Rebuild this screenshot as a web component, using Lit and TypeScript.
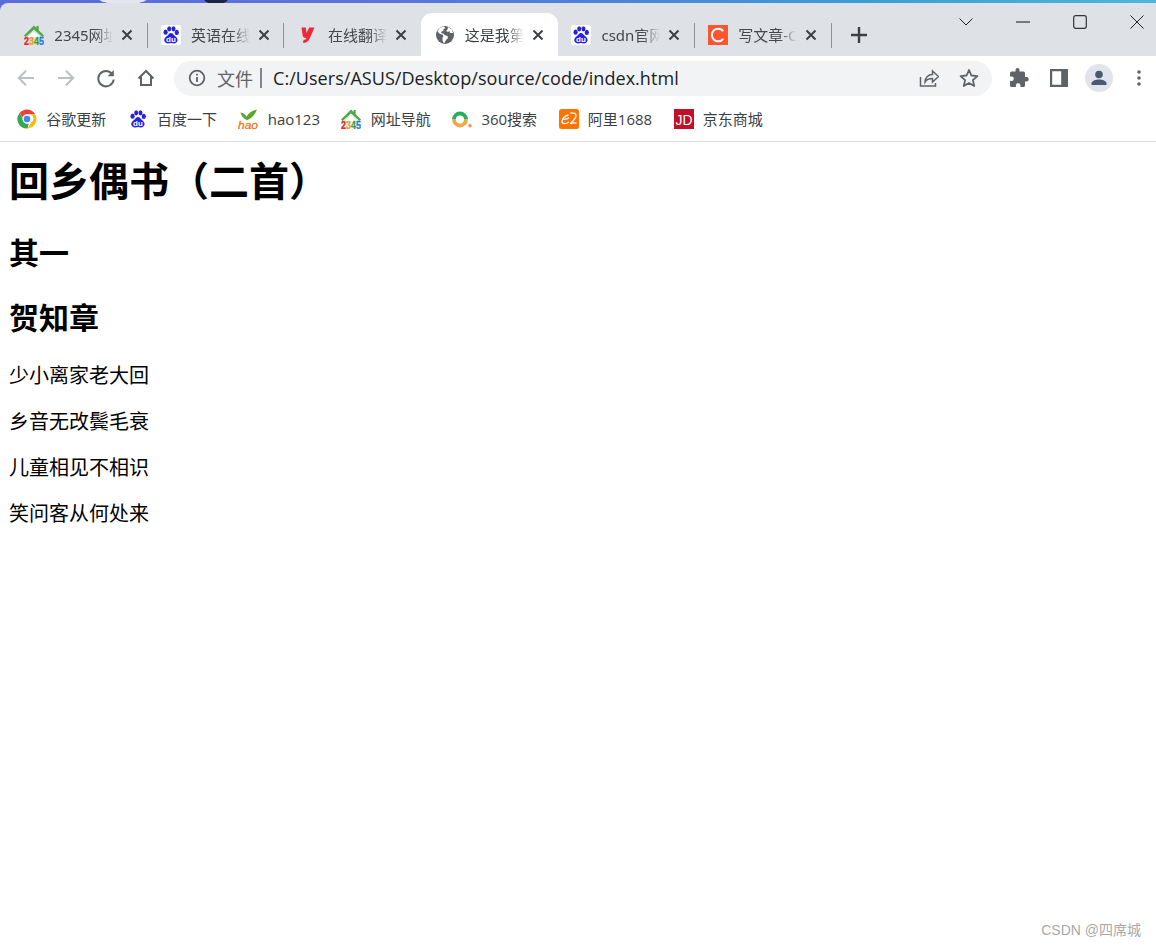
import { LitElement, html, css, svg } from "lit";
import { customElement } from "lit/decorators.js";

const paw = (tile: boolean) => html`<svg class="ic" viewBox="0 0 20 20">
  ${tile ? svg`<rect width="20" height="20" rx="2" fill="#fff"/>` : ""}
  <g fill="#2522e0">
    <ellipse cx="4.600" cy="7.200" rx="2.100" ry="2.600"/>
    <ellipse cx="8.200" cy="3.800" rx="2" ry="2.600"/>
    <ellipse cx="12.500" cy="3.800" rx="2" ry="2.600"/>
    <ellipse cx="15.800" cy="7.400" rx="2.100" ry="2.600"/>
    <path d="M10 8c-1.600 0-2.400 1.400-3.400 2.500-1 1.100-3.400 2.300-3.400 4.600 0 2 1.800 3.500 3.800 3.300 1.200-.1 2-.5 3-.5s1.800.4 3 .5c2 .2 3.600-1.300 3.600-3.300 0-2.300-2.300-3.500-3.200-4.600-1-1.100-1.800-2.500-3.400-2.500z"/>
  </g>
  <text x="10" y="16.800" text-anchor="middle" font-size="8" font-weight="700" font-family="Liberation Sans" fill="#fff">du</text>
</svg>`;

const house = html`<svg class="ic" viewBox="0 0 20 20">
  <path d="M0 10.500 10 .5l2.500 2.500V1h2.200v4.200l5.300 5.300-1.600 1.600L10 4.400 1.600 12.100z" fill="#4fa94a"/>
  <path d="M3.600 11.400 10 5.800l6.400 5.600v1.400H3.600z" fill="#fff" stroke="#b5d8ad" stroke-width=".6"/>
  <text x="0" y="20" font-size="10" font-weight="700" font-family="Liberation Sans" stroke-width=".3" textLength="20" lengthAdjust="spacingAndGlyphs"><tspan fill="#e8262a" stroke="#e8262a">2</tspan><tspan fill="#e8a226" stroke="#e8a226">3</tspan><tspan fill="#3f9e3f" stroke="#3f9e3f">4</tspan><tspan fill="#2b7bd6" stroke="#2b7bd6">5</tspan></text>
</svg>`;

const youdao = html`<svg class="ic" viewBox="0 0 20 20">
  <path d="M3.500 2.500h4.300l.7 5.600 2.700-5.600h5.300l-4.800 11c-1.300 2.900-3.300 4.500-6.700 4.500l.6-3.300c1.500 0 2.300-.4 2.900-1.500L6.500 12.800 4.800 11.500z" fill="#ed2a3a"/>
</svg>`;

const globe = html`<svg class="ic" viewBox="0 0 20 20">
  <circle cx="10" cy="10" r="9" fill="#5f6368"/>
  <path d="M2.500 6.500 5 9l2.500.5 1 2-1 1v3l1 2.500h1l1.500-3 2-2-.5-2-3-1-1-1.500H7L6 7l2.500-1.500V4l2-1L8.500 1.500 4.500 3zM13 2l-.5 2.500-1.500 1.500 2 1 1.500-1 .5 2h3L17 4.500z" fill="#fff"/>
</svg>`;

const csdn = html`<svg class="ic" viewBox="0 0 20 20">
  <rect width="20" height="20" fill="#fc5531"/>
  <path d="M15.200 6.200A6.300 6.300 0 1 0 15.200 13.800" fill="none" stroke="#fff" stroke-width="2"/>
</svg>`;

const chrome = html`<svg class="ic" viewBox="0 0 20 20">
  <path d="M10 .5a9.500 9.500 0 0 1 8.200 4.800H10a4.700 4.700 0 0 0-4.500 3.300L2.600 4A9.500 9.500 0 0 1 10 .5z" fill="#ea4335"/>
  <path d="M18.200 5.300A9.500 9.500 0 0 1 10.600 19.500l3.500-6.100a4.700 4.700 0 0 0-.2-8.100z" fill="#fbbc04"/>
  <path d="M10.600 19.500A9.500 9.500 0 0 1 2.600 4l3 5.200a4.700 4.700 0 0 0 6.100 5.300z" fill="#34a853"/>
  <circle cx="10" cy="10" r="3.900" fill="#4285f4" stroke="#fff" stroke-width="1"/>
</svg>`;

const hao = html`<svg class="ic" viewBox="0 0 20 20">
  <path d="M2.500 3.500c3 .3 5 2 6 4.200C10.500 4 14.500 1.500 19 .5c-1.500 4-4.500 8.500-9.500 10.500C6.500 10.500 3.500 7.500 2.500 3.500z" fill="#5aa62c"/>
  <text x="10" y="19.600" text-anchor="middle" font-size="10" font-style="italic" font-family="Liberation Sans" fill="#f0791f" stroke="#f0791f" stroke-width=".3" textLength="20" lengthAdjust="spacingAndGlyphs">hao</text>
</svg>`;

const s360 = html`<svg class="ic" viewBox="0 0 20 20">
  <path d="M2 10.500a6 6 0 0 1 12 0" fill="none" stroke="#27ae60" stroke-width="3.800"/>
  <path d="M2 10.500a6 6 0 0 0 12 0" fill="none" stroke="#f5a54a" stroke-width="3.800"/>
  <circle cx="18" cy="16.800" r="1.800" fill="#f5914a"/>
</svg>`;

const ali = html`<svg class="ic" viewBox="0 0 20 20">
  <rect width="20" height="20" rx="2.500" fill="#ff7300"/>
  <path d="M9.500 6C6.500 6.500 3 9.500 3 12.500c0 3 4 2.500 7 .5M4.500 10c2 .5 3.800 0 5.500-1.500M11.500 4c3-.5 6 .5 5.500 3.200-.4 2.300-3 5-5.800 7.300 2-.5 4.300-.8 6.300-.3" fill="none" stroke="#fff" stroke-width="1.300"/>
</svg>`;

const jd = html`<svg class="ic" viewBox="0 0 20 20">
  <rect width="20" height="20" fill="#c3102a"/>
  <text x="10" y="16" text-anchor="middle" font-size="15" font-family="Liberation Sans" fill="#fff" textLength="17" lengthAdjust="spacingAndGlyphs">JD</text>
</svg>`;

const tabs = [
  { icon: house, title: "2345网址导航" },
  { icon: paw(true), title: "英语在线翻译" },
  { icon: youdao, title: "在线翻译_有道" },
  { icon: globe, title: "这是我第一个网页", active: true },
  { icon: paw(true), title: "csdn官网" },
  { icon: csdn, title: "写文章-CSDN" },
];

const bookmarks = [
  { icon: chrome, title: "谷歌更新" },
  { icon: paw(false), title: "百度一下" },
  { icon: hao, title: "hao123" },
  { icon: house, title: "网址导航" },
  { icon: s360, title: "360搜索" },
  { icon: ali, title: "阿里1688" },
  { icon: jd, title: "京东商城" },
];

const closeX = html`<svg class="x" viewBox="0 0 12 12"><path d="M1.500 1.500l9 9M10.500 1.500l-9 9" stroke="#3c4043" stroke-width="2" fill="none"/></svg>`;

@customElement("app-root")
export class AppRoot extends LitElement {
  static styles = css`
    :host { display: block; position: relative; width: 1156px; height: 946px; overflow: hidden; background: #fff; color: #000; font-family: "Noto Sans CJK SC", sans-serif; }
    .top { padding-top: 3px; background:
        radial-gradient(ellipse 24px 4px at 123px 0, #e6e6ee 90%, transparent 100%),
        radial-gradient(ellipse 12px 4px at 216px 0, #1c2540 90%, transparent 100%),
        linear-gradient(90deg, #5b6bdc 0%, #5a74dc 35%, #4a86d8 55%, #3d9cd6 75%, #4fb5de 100%); }
    .strip { height: 53px; background: #dee1e6; border-radius: 8px 0 0 0; display: flex; padding-left: 10.800px; box-sizing: border-box; position: relative; }
    .tab { width: 136.800px; height: 53px; flex: none; box-sizing: border-box; display: flex; align-items: center; padding: 10px 13.500px 0; position: relative; font: 15px "Noto Sans", "Noto Sans CJK SC", sans-serif; color: #45474a; }
    .tab.sep::after { content: ""; position: absolute; right: 0; top: 20px; height: 25px; width: 1px; background: #8f9296; }
    .tab.active { background: #fff; border-radius: 11px 11px 0 0; height: 43px; margin-top: 10px; padding-top: 0; color: #3c4043; }
    .ic { width: 20px; height: 20px; flex: none; display: block; }
    .t-title { margin-left: 10px; width: 59px; flex: none; overflow: hidden; white-space: nowrap; -webkit-mask-image: linear-gradient(90deg, #000 70%, transparent 100%); mask-image: linear-gradient(90deg, #000 70%, transparent 100%); }
    .x { width: 12px; height: 12px; flex: none; margin-left: 8px; }
    .plus { width: 16px; height: 16px; margin: 24px 0 0 19px; flex: none; }
    .win { margin-left: auto; display: flex; height: 40px; flex: none; }
    .win div { display: flex; align-items: center; justify-content: center; height: 37px; }
    .win svg { display: block; }
    .w-chev { width: 57px; }
    .w-btn { width: 57px; }
    .w-last { width: 47.500px; justify-content: flex-start !important; padding-left: 21.500px; box-sizing: border-box; }
    .bar { height: 44px; display: flex; align-items: center; padding-left: 6px; overflow: hidden; background: #fff; }
    .btn { width: 40px; height: 44px; flex: none; display: flex; align-items: center; justify-content: center; }
    .omni { width: 818px; height: 35px; flex: none; margin: 0 7px 0 8px; border-radius: 18px; background: #f1f3f4; display: flex; align-items: center; box-sizing: border-box; padding: 0 3px 0 14px; font: 18px "Open Sans", "Noto Sans CJK SC", sans-serif; }
    .scheme { color: #5f6368; margin-left: 11px; }
    .div { width: 2px; height: 20px; background: #80868b; margin: 0 11px 0 7px; }
    .url { color: #202124; white-space: nowrap; letter-spacing: 0.045px; }
    .o-right { margin-left: auto; display: flex; }
    .o-right .btn { height: 35px; }
    .avatar { width: 28px; height: 28px; border-radius: 50%; background: #e1e4ea; display: flex; align-items: center; justify-content: center; }
    .marks { height: 41px; box-sizing: border-box; display: flex; align-items: center; padding: 0 0 4px 17px; gap: 21.400px; background: #fff; font: 15px "Open Sans", "Noto Sans CJK SC", sans-serif; color: #3c4043; }
    .mark { display: flex; align-items: center; gap: 9.300px; white-space: nowrap; }
    .rule { height: 1px; background: #dadce0; }
    main { padding: 0 9px; }
    h1, h2, p { margin: 0; font-family: "Liberation Sans", "Noto Sans CJK SC", sans-serif; }
    h1 { font-size: 40px; line-height: 52px; padding-top: 14px; }
    h2 { font-size: 30px; line-height: 40px; margin-top: 26px; }
    h2 + h2 { margin-top: 25px; }
    p { font-size: 20px; line-height: 26px; margin-top: 20px; }
    h2 + p { margin-top: 24px; }
    .mark-wm { position: absolute; right: 15px; bottom: 7px; font: 14px "Liberation Sans", "Noto Sans CJK SC", sans-serif; color: #a9a9a9; }
  `;

  render() {
    return html`
      <div class="top">
        <div class="strip">
          ${tabs.map((t, i) => html`
            <div class="tab ${t.active ? "active" : ""} ${!t.active && tabs[i + 1] && !tabs[i + 1].active ? "sep" : ""} ${i === tabs.length - 1 ? "sep" : ""}">
              ${t.icon}<span class="t-title">${t.title}</span>${closeX}
            </div>`)}
          <svg class="plus" viewBox="0 0 16 16"><path d="M8 0v16M0 8h16" stroke="#3c4043" stroke-width="2.400" fill="none"/></svg>
          <div class="win">
            <div class="w-chev"><svg width="16" height="10" viewBox="0 0 16 10"><path d="M1.500 1.500 8 8l6.500-6.500" fill="none" stroke="#222" stroke-width="1"/></svg></div>
            <div class="w-btn"><svg width="14" height="2" viewBox="0 0 14 2"><path d="M0 1h14" stroke="#111" stroke-width="1"/></svg></div>
            <div class="w-btn"><svg width="14" height="14" viewBox="0 0 14 14"><rect x=".7" y=".7" width="12.600" height="12.600" rx="2" fill="none" stroke="#333" stroke-width="1.200"/></svg></div>
            <div class="w-last"><svg width="14" height="14" viewBox="0 0 14 14"><path d="M.5.5l13 13M13.500.5l-13 13" stroke="#222" stroke-width="1" fill="none"/></svg></div>
          </div>
        </div>
      </div>
      <div class="bar">
        <div class="btn"><svg width="20" height="20" viewBox="0 0 20 20"><path d="M18 10H3M10 2.800 2.800 10l7.200 7.200" fill="none" stroke="#bcbfc3" stroke-width="2"/></svg></div>
        <div class="btn"><svg width="20" height="20" viewBox="0 0 20 20"><path d="M2 10h15M10 2.800 17.200 10 10 17.200" fill="none" stroke="#bcbfc3" stroke-width="2"/></svg></div>
        <div class="btn"><svg width="20" height="20" viewBox="0 0 20 20"><path d="M16.200 6A7.700 7.700 0 1 0 17.700 11.500" fill="none" stroke="#5f6368" stroke-width="2"/><path d="M17.800 2v6.200h-6.200z" fill="#5f6368"/></svg></div>
        <div class="btn"><svg width="20" height="20" viewBox="0 0 20 20"><path d="M2.500 10.500 10 3l7.500 7.500M5 8.500v8.500h10V8.500" fill="none" stroke="#5f6368" stroke-width="2"/></svg></div>
        <div class="omni">
          <svg width="18" height="18" viewBox="0 0 18 18"><circle cx="9" cy="9" r="7.300" fill="none" stroke="#5f6368" stroke-width="1.800"/><path d="M9 8v5M9 4.800v1.800" stroke="#5f6368" stroke-width="1.800"/></svg>
          <span class="scheme">文件</span><span class="div"></span>
          <span class="url">C:/Users/ASUS/Desktop/source/code/index.html</span>
          <div class="o-right">
            <div class="btn"><svg width="20" height="20" viewBox="0 0 20 20"><path d="M1.500 9v9h15v-3M6 14c0-4 3-7.500 7.500-7.500V3l6 5.500-6 5.500v-3.500C10 10.500 7.500 11.500 6 14z" fill="none" stroke="#5f6368" stroke-width="1.500"/></svg></div>
            <div class="btn"><svg width="20" height="20" viewBox="0 0 20 20"><path d="M10 2l2.400 5.500 6 .6-4.500 4 1.300 5.900L10 15l-5.200 3 1.300-5.900-4.500-4 6-.6z" fill="none" stroke="#5f6368" stroke-width="1.800" stroke-linejoin="round"/></svg></div>
          </div>
        </div>
        <div class="btn"><svg width="20" height="20" viewBox="0 0 20 20"><path d="M17.500 9H16V5a1.500 1.500 0 0 0-1.500-1.500h-4V2a2 2 0 0 0-4 0v1.500h-4A1.500 1.500 0 0 0 1 5v3.500h1.500a2.300 2.300 0 0 1 0 4.600H1v4.400A1.500 1.500 0 0 0 2.500 19h4.400v-1.500a2.300 2.300 0 0 1 4.600 0V19H14.500a1.500 1.500 0 0 0 1.500-1.500V13.500h1.500a2.250 2.250 0 0 0 0-4.500z" fill="#5f6368"/></svg></div>
        <div class="btn"><svg width="18" height="18" viewBox="0 0 18 18"><path d="M0 0h18v18H0zM2.200 2.200v13.600h9V2.200z" fill="#5f6368" fill-rule="evenodd"/></svg></div>
        <div class="btn"><div class="avatar"><svg width="18" height="18" viewBox="0 0 18 18"><circle cx="9" cy="5.500" r="3.800" fill="#4a5a75"/><path d="M1.500 16v-1.500C1.500 12 5.500 10.500 9 10.500s7.500 1.500 7.500 4V16z" fill="#4a5a75"/></svg></div></div>
        <div class="btn"><svg width="4" height="16" viewBox="0 0 4 16"><circle cx="2" cy="2" r="1.800" fill="#5f6368"/><circle cx="2" cy="8" r="1.800" fill="#5f6368"/><circle cx="2" cy="14" r="1.800" fill="#5f6368"/></svg></div>
      </div>
      <div class="marks">
        ${bookmarks.map((b) => html`<div class="mark">${b.icon}<span>${b.title}</span></div>`)}
      </div>
      <div class="rule"></div>
      <main>
        <h1>回乡偶书（二首）</h1>
        <h2>其一</h2>
        <h2>贺知章</h2>
        <p>少小离家老大回</p>
        <p>乡音无改鬓毛衰</p>
        <p>儿童相见不相识</p>
        <p>笑问客从何处来</p>
      </main>
      <div class="mark-wm">CSDN @四席城</div>
    `;
  }
}
